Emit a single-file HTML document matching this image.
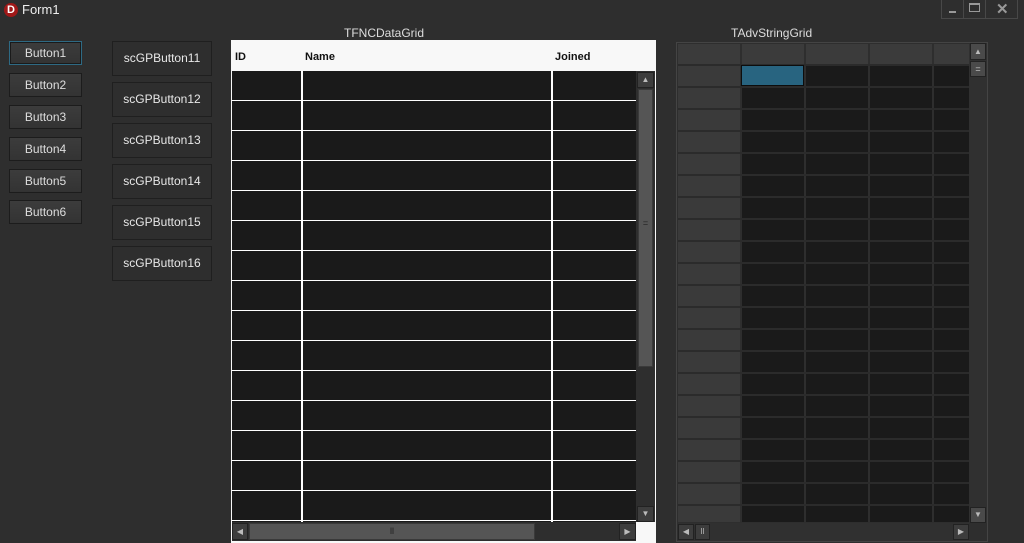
<!DOCTYPE html>
<html><head><style>
*{margin:0;padding:0;box-sizing:border-box}
body{width:1024px;height:543px;background:#2e2e2e;position:relative;overflow:hidden;font-family:"Liberation Sans",sans-serif;font-size:12px;color:#e8e8e8}
.a{position:absolute}
.btn{position:absolute;left:9px;width:73px;height:24px;background:linear-gradient(#3c3c3c,#333);border:1px solid #1c1c1c;text-align:center;line-height:22px;color:#ddd}
.sc{position:absolute;left:112px;width:100px;height:35px;background:#2e2e2e;border:1px solid #1f1f1f;text-align:center;line-height:33px;color:#e8e8e8}
.sb{background:#3d3d3d;border:1px solid #222}
</style></head><body>
<div class="a" style="left:4px;top:3px;width:14px;height:14px;border-radius:50%;background:#a01818;color:#fff;font-weight:bold;font-size:11px;line-height:14px;text-align:center">D</div>
<div class="a" style="left:22px;top:2px;font-size:13px;color:#eee">Form1</div>
<div class="a" style="left:941px;top:0;width:77px;height:19px;border:1px solid #484848;border-top:none"></div>
<div class="a" style="left:963px;top:0;width:1px;height:18px;background:#484848"></div>
<div class="a" style="left:985px;top:0;width:1px;height:18px;background:#484848"></div>
<div class="a" style="left:949px;top:11px;width:7px;height:2px;background:#999"></div>
<div class="a" style="left:969px;top:3px;width:11px;height:9px;border:1px solid #999;border-top-width:2px"></div>
<div class="a" style="left:996px;top:0px;font-size:15px;color:#999;font-weight:bold">✕</div>

<div class="btn" style="top:41px;border-color:#2e6a84;box-shadow:inset 0 0 0 1px #1a1a1a">Button1</div>
<div class="btn" style="top:73px">Button2</div>
<div class="btn" style="top:105px">Button3</div>
<div class="btn" style="top:137px">Button4</div>
<div class="btn" style="top:169px">Button5</div>
<div class="btn" style="top:200px">Button6</div>

<div class="sc" style="top:41px">scGPButton11</div>
<div class="sc" style="top:82px">scGPButton12</div>
<div class="sc" style="top:123px">scGPButton13</div>
<div class="sc" style="top:164px">scGPButton14</div>
<div class="sc" style="top:205px">scGPButton15</div>
<div class="sc" style="top:246px">scGPButton16</div>

<div class="a" style="left:344px;top:26px;color:#ddd">TFNCDataGrid</div>
<div class="a" style="left:231px;top:40px;width:425px;height:503px;background:#f8f8f8"></div>
<div class="a" style="left:235px;top:51px;color:#111;font-weight:bold;font-size:11px">ID</div>
<div class="a" style="left:305px;top:51px;color:#111;font-weight:bold;font-size:11px">Name</div>
<div class="a" style="left:555px;top:51px;color:#111;font-weight:bold;font-size:11px">Joined</div>
<div class="a" style="left:232px;top:71px;width:404px;height:451px;background:
linear-gradient(90deg,transparent 69px,#fff 69px,#fff 71px,transparent 71px,transparent 319px,#fff 319px,#fff 321px,transparent 321px),
repeating-linear-gradient(#1a1a1a 0,#1a1a1a 29px,#fff 29px,#fff 30px);"></div>
<div class="a" style="left:636px;top:71px;width:19px;height:451px;background:#2e2e2e"></div>
<div class="a sb" style="left:637px;top:72px;width:17px;height:16px;color:#bbb;font-size:8px;text-align:center;line-height:14px">▲</div>
<div class="a" style="left:638px;top:89px;width:15px;height:278px;background:#555;border:1px solid #3a3a3a;color:#222;font-size:9px;text-align:center;padding-top:128px">=</div>
<div class="a sb" style="left:637px;top:506px;width:17px;height:16px;color:#bbb;font-size:8px;text-align:center;line-height:14px">▼</div>
<div class="a" style="left:232px;top:522px;width:404px;height:19px;background:#2e2e2e"></div>
<div class="a sb" style="left:232px;top:523px;width:16px;height:17px;color:#bbb;font-size:8px;text-align:center;line-height:15px">◀</div>
<div class="a" style="left:249px;top:523px;width:286px;height:17px;background:#555;border:1px solid #3a3a3a;color:#222;font-size:9px;text-align:center;line-height:15px">ll</div>
<div class="a sb" style="left:619px;top:523px;width:17px;height:17px;color:#bbb;font-size:8px;text-align:center;line-height:15px">▶</div>

<div class="a" style="left:731px;top:26px;color:#ddd">TAdvStringGrid</div>
<div class="a" style="left:676px;top:42px;width:312px;height:500px;border:1px solid #444;background:#2e2e2e"></div>
<div class="a" style="left:678px;top:44px;width:291px;height:478px;background:
linear-gradient(90deg,#3a3a3a 0,#3a3a3a 62px,transparent 62px),
repeating-linear-gradient(90deg,#1a1a1a 0,#1a1a1a 62px,#2e2e2e 62px,#2e2e2e 64px);"></div>
<div class="a" style="left:678px;top:44px;width:291px;height:478px;background:
repeating-linear-gradient(transparent 0,transparent 20px,#2b2b2b 20px,#2b2b2b 22px);"></div>
<div class="a" style="left:678px;top:44px;width:291px;height:20px;background:
repeating-linear-gradient(90deg,#3b3b3b 0,#3b3b3b 62px,#2e2e2e 62px,#2e2e2e 64px);"></div>
<div class="a" style="left:741px;top:65px;width:63px;height:21px;background:#286480;border:1px solid #0d0d0d"></div>
<div class="a" style="left:969px;top:44px;width:18px;height:479px;background:#303030"></div>
<div class="a sb" style="left:970px;top:43px;width:16px;height:17px;color:#bbb;font-size:8px;text-align:center;line-height:15px;background:#4a4a4a">▲</div>
<div class="a sb" style="left:970px;top:61px;width:16px;height:16px;color:#ccc;font-size:9px;text-align:center;line-height:14px;background:#4a4a4a">=</div>
<div class="a sb" style="left:970px;top:507px;width:16px;height:16px;color:#bbb;font-size:8px;text-align:center;line-height:14px;background:#4a4a4a">▼</div>
<div class="a" style="left:678px;top:523px;width:291px;height:18px;background:#303030"></div>
<div class="a sb" style="left:678px;top:524px;width:16px;height:16px;color:#bbb;font-size:8px;text-align:center;line-height:14px">◀</div>
<div class="a sb" style="left:695px;top:524px;width:15px;height:16px;color:#bbb;font-size:8px;text-align:center;line-height:14px">ll</div>
<div class="a sb" style="left:953px;top:524px;width:16px;height:16px;color:#bbb;font-size:8px;text-align:center;line-height:14px">▶</div>
</body></html>
